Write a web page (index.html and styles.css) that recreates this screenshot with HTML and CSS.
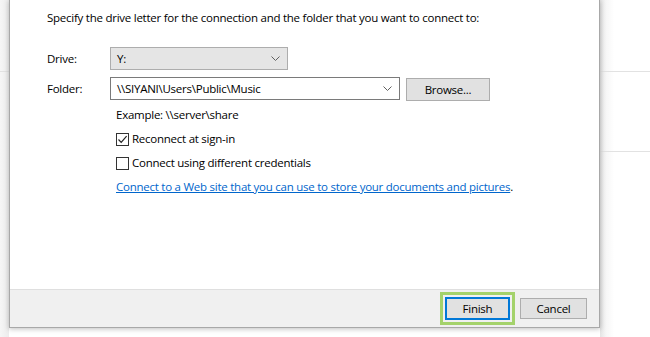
FILE: index.html
```html
<!DOCTYPE html>
<html>
<head>
    <title>Map Network Drive</title>
    <link rel="stylesheet" href="styles.css">
</head>
<body>
    <div class="desktop">
        <div class="side side-left">
            <div class="band band-first"></div>
        </div>

        <div class="dialog">
            <div class="content">
                <p class="intro">Specify the drive letter for the connection and the folder that you want to connect to:</p>

                <!-- Drive -->
                <div class="form-row row-drive">
                    <span class="label">Drive:</span>
                    <div class="select">
                        <span>Y:</span>
                        <svg class="chevron" width="9" height="5" viewBox="0 0 9 5"><path d="M0.5 0.5 L4.5 4.5 L8.5 0.5" fill="none" stroke="#606060" stroke-width="1"/></svg>
                    </div>
                </div>

                <!-- Folder -->
                <div class="form-row row-folder">
                    <span class="label">Folder:</span>
                    <div class="combo">
                        <span>\\SIYANI\Users\Public\Music</span>
                        <svg class="chevron" width="9" height="5" viewBox="0 0 9 5"><path d="M0.5 0.5 L4.5 4.5 L8.5 0.5" fill="none" stroke="#606060" stroke-width="1"/></svg>
                    </div>
                    <button class="btn btn-browse">Browse...</button>
                </div>

                <div class="options">
                    <div class="example">Example: \\server\share</div>

                    <div class="check">
                        <span class="box">
                            <svg width="11" height="11" viewBox="0 0 11 11"><path d="M1.5 5.5 L4.2 8.3 L9.6 2.2" fill="none" stroke="#222" stroke-width="1.2"/></svg>
                        </span>
                        Reconnect at sign-in
                    </div>
                    <div class="check">
                        <span class="box"></span>
                        Connect using different credentials
                    </div>

                    <div class="link-line"><a href="#" class="link">Connect to a Web site that you can use to store your documents and pictures</a>.</div>
                </div>
            </div>

            <div class="footer">
                <button class="btn btn-finish">Finish</button>
                <button class="btn btn-cancel">Cancel</button>
            </div>
        </div>

        <div class="side side-right">
            <div class="band band-first"></div>
            <div class="band band-second"></div>
        </div>
    </div>
</body>
</html>
```

FILE: styles.css
```css
body {
    margin: 0;
    background: #ffffff;
    font-family: "Open Sans", "Noto Sans", sans-serif;
    font-size: 11.5px;
    letter-spacing: -0.25px;
    color: #000;
    overflow: hidden;
}
.desktop {
    display: flex;
    height: 337px;
}
.side {
    display: flex;
    flex-direction: column;
}
.side-left {
    width: 9px;
    background: linear-gradient(to right, #f6f6f6, #ececec);
}
.side-right {
    flex: 1;
    background: linear-gradient(to right, #e4e4e4, #f6f6f6 6px, #ffffff 14px);
}
.band {
    border-bottom: 1px solid #e2e2e2;
}
.band-first {
    height: 71px;
}
.band-second {
    height: 79px;
}
.dialog {
    width: 589px;
    height: 327px;
    display: flex;
    flex-direction: column;
    border-left: 1px solid #a8a8a8;
    border-right: 1px solid #a8a8a8;
    border-bottom: 1px solid #a8a8a8;
    background: #fff;
    box-shadow: 0 1px 5px rgba(0, 0, 0, 0.25);
    position: relative;
    z-index: 1;
}
.content {
    flex: 1;
    padding-left: 37px;
}
.intro {
    margin: 10px 0 0;
    line-height: 16px;
}
.form-row {
    display: flex;
    align-items: center;
}
.row-drive {
    margin-top: 21px;
}
.row-folder {
    margin-top: 6px;
}
.label {
    width: 63px;
}
.select,
.combo {
    display: flex;
    align-items: center;
    justify-content: space-between;
    box-sizing: border-box;
    padding: 0 5px 0 6px;
}
.select {
    width: 178px;
    height: 23px;
    background: #e5e5e5;
    border: 1px solid #adadad;
}
.combo {
    width: 290px;
    height: 23px;
    background: #fff;
    border: 1px solid #7a7a7a;
}
.chevron {
    margin-right: 2px;
}
.btn {
    font-family: inherit;
    font-size: 11.5px;
    letter-spacing: -0.25px;
    background: #e1e1e1;
    border: 1px solid #adadad;
    padding: 0;
    box-sizing: border-box;
    color: #000;
}
.btn-browse {
    width: 84px;
    height: 23px;
    margin-left: 6px;
    margin-top: 2px;
}
.options {
    padding-left: 69px;
}
.example {
    margin-top: 6px;
    line-height: 16px;
}
.check {
    display: flex;
    align-items: center;
    margin-top: 8px;
    line-height: 16px;
}
.box {
    width: 13px;
    height: 13px;
    box-sizing: border-box;
    border: 1px solid #333;
    margin-right: 3px;
    display: flex;
    align-items: center;
    justify-content: center;
    background: #fff;
}
.link-line {
    margin-top: 8px;
    line-height: 16px;
}
.link {
    color: #0066cc;
    text-decoration: underline;
}
.footer {
    height: 38px;
    border-top: 1px solid #dfdfdf;
    background: #f0f0f0;
    display: flex;
    justify-content: flex-end;
    align-items: flex-start;
    padding: 7px 12px 0 0;
    box-sizing: border-box;
}
.btn-finish {
    width: 65px;
    height: 23px;
    border: 2px solid #0078d7;
    outline: 3px solid #a4d26b;
    outline-offset: 2px;
}
.btn-cancel {
    width: 67px;
    height: 21px;
    margin-left: 10px;
    margin-top: 1px;
}
```
